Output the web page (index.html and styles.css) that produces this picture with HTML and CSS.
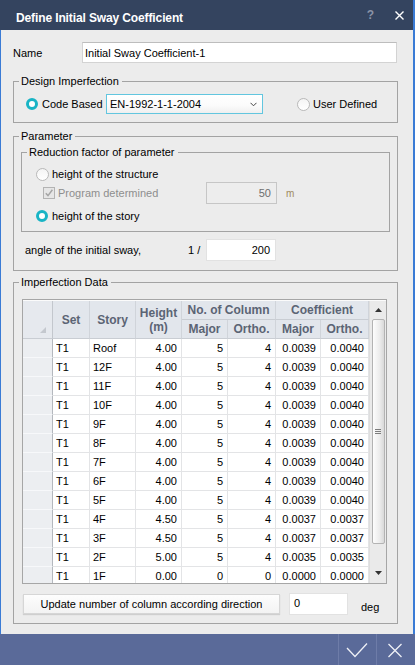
FILE: index.html
```html
<!DOCTYPE html>
<html>
<head>
<meta charset="utf-8">
<link rel="stylesheet" href="styles.css">
</head>
<body>
<div class="window">
  <div class="titlebar">
    <span class="title">Define Initial Sway Coefficient</span>
    <span class="help">?</span>
    <svg class="close" width="9" height="9" viewBox="0 0 9 9"><path d="M0.5 0.5 L8.5 8.5 M8.5 0.5 L0.5 8.5" stroke="#ffffff" stroke-width="1.4" fill="none"/></svg>
  </div>
  <div class="content">
    <div class="name-row">
      <span class="name-label">Name</span>
      <div class="field name-field">Initial Sway Coefficient-1</div>
    </div>

    <fieldset class="group g-design">
      <legend class="lg-design">Design Imperfection</legend>
      <div class="design-row">
        <span class="radio on"></span>
        <span class="rlabel code-label">Code Based</span>
        <div class="select">
          <span>EN-1992-1-1-2004</span>
          <svg width="7" height="5" viewBox="0 0 7 5"><path d="M0.5 0.8 L3.5 3.8 L6.5 0.8" stroke="#444" stroke-width="1" fill="none"/></svg>
        </div>
        <span class="radio off user-radio"></span>
        <span class="rlabel">User Defined</span>
      </div>
    </fieldset>

    <fieldset class="group g-param">
      <legend class="lg-param">Parameter</legend>
      <fieldset class="group g-reduce">
        <legend class="lg-reduce">Reduction factor of parameter</legend>
        <div class="opt-row">
          <span class="radio off"></span>
          <span class="rlabel">height of the structure</span>
        </div>
        <div class="check-row">
          <span class="checkbox">
            <svg width="10" height="10" viewBox="0 0 10 10"><path d="M1.8 5.2 L4 7.6 L8.4 1.8" stroke="#a5a5a5" stroke-width="1.5" fill="none"/></svg>
          </span>
          <span class="dis-label">Program determined</span>
          <div class="field dis-field">50</div>
          <span class="unit">m</span>
        </div>
        <div class="opt-row story-row">
          <span class="radio on"></span>
          <span class="rlabel">height of the story</span>
        </div>
      </fieldset>
      <div class="angle-row">
        <span class="angle-label">angle of the initial sway,</span>
        <span class="ratio">1 /</span>
        <div class="field num-field">200</div>
      </div>
    </fieldset>

    <fieldset class="group g-data">
      <legend class="lg-data">Imperfection Data</legend>
      <div class="grid-wrap">
        <div class="grid">
          <div class="hc corner"><span class="tri"></span></div>
          <div class="hc span2">Set</div>
          <div class="hc span2">Story</div>
          <div class="hc span2 two">Height<br>(m)</div>
          <div class="hc cspan2">No. of Column</div>
          <div class="hc cspan2">Coefficient</div>
          <div class="hc">Major</div>
          <div class="hc">Ortho.</div>
          <div class="hc">Major</div>
          <div class="hc">Ortho.</div>

          <div class="rh"></div><div class="c">T1</div><div class="c">Roof</div><div class="c r">4.00</div><div class="c r">5</div><div class="c r">4</div><div class="c r">0.0039</div><div class="c r">0.0040</div>
          <div class="rh"></div><div class="c">T1</div><div class="c">12F</div><div class="c r">4.00</div><div class="c r">5</div><div class="c r">4</div><div class="c r">0.0039</div><div class="c r">0.0040</div>
          <div class="rh"></div><div class="c">T1</div><div class="c">11F</div><div class="c r">4.00</div><div class="c r">5</div><div class="c r">4</div><div class="c r">0.0039</div><div class="c r">0.0040</div>
          <div class="rh"></div><div class="c">T1</div><div class="c">10F</div><div class="c r">4.00</div><div class="c r">5</div><div class="c r">4</div><div class="c r">0.0039</div><div class="c r">0.0040</div>
          <div class="rh"></div><div class="c">T1</div><div class="c">9F</div><div class="c r">4.00</div><div class="c r">5</div><div class="c r">4</div><div class="c r">0.0039</div><div class="c r">0.0040</div>
          <div class="rh"></div><div class="c">T1</div><div class="c">8F</div><div class="c r">4.00</div><div class="c r">5</div><div class="c r">4</div><div class="c r">0.0039</div><div class="c r">0.0040</div>
          <div class="rh"></div><div class="c">T1</div><div class="c">7F</div><div class="c r">4.00</div><div class="c r">5</div><div class="c r">4</div><div class="c r">0.0039</div><div class="c r">0.0040</div>
          <div class="rh"></div><div class="c">T1</div><div class="c">6F</div><div class="c r">4.00</div><div class="c r">5</div><div class="c r">4</div><div class="c r">0.0039</div><div class="c r">0.0040</div>
          <div class="rh"></div><div class="c">T1</div><div class="c">5F</div><div class="c r">4.00</div><div class="c r">5</div><div class="c r">4</div><div class="c r">0.0039</div><div class="c r">0.0040</div>
          <div class="rh"></div><div class="c">T1</div><div class="c">4F</div><div class="c r">4.50</div><div class="c r">5</div><div class="c r">4</div><div class="c r">0.0037</div><div class="c r">0.0037</div>
          <div class="rh"></div><div class="c">T1</div><div class="c">3F</div><div class="c r">4.50</div><div class="c r">5</div><div class="c r">4</div><div class="c r">0.0037</div><div class="c r">0.0037</div>
          <div class="rh"></div><div class="c">T1</div><div class="c">2F</div><div class="c r">5.00</div><div class="c r">5</div><div class="c r">4</div><div class="c r">0.0035</div><div class="c r">0.0035</div>
          <div class="rh"></div><div class="c">T1</div><div class="c">1F</div><div class="c r">0.00</div><div class="c r">0</div><div class="c r">0</div><div class="c r">0.0000</div><div class="c r">0.0000</div>
        </div>
        <div class="scrollbar">
          <div class="sb-btn">
            <svg width="7" height="4" viewBox="0 0 7 4"><path d="M0 4 L3.5 0 L7 4 Z" fill="#333"/></svg>
          </div>
          <div class="thumb">
            <span class="grip"></span><span class="grip"></span><span class="grip"></span>
          </div>
          <div class="sb-btn sb-down">
            <svg width="7" height="4" viewBox="0 0 7 4"><path d="M0 0 L3.5 4 L7 0 Z" fill="#333"/></svg>
          </div>
        </div>
      </div>
      <div class="update-row">
        <div class="btn">Update number of column according direction</div>
        <div class="field deg-field">0</div>
        <span class="deg">deg</span>
      </div>
    </fieldset>
  </div>
  <div class="footer">
    <div class="fbtn">
      <svg width="38" height="31" viewBox="0 0 38 31"><path d="M9 14 L17 22.5 L29 9.5" stroke="#eef0f6" stroke-width="1.3" fill="none"/></svg>
    </div>
    <div class="fbtn fbtn2">
      <svg width="39" height="31" viewBox="0 0 39 31"><path d="M12.5 10 L25.5 23 M25.5 10 L12.5 23" stroke="#eef0f6" stroke-width="1.3" fill="none"/></svg>
    </div>
  </div>
</div>
</body>
</html>
```
FILE: styles.css
```css
* { box-sizing: border-box; }
html, body { margin: 0; padding: 0; }
body {
  width: 415px;
  height: 665px;
  font-family: "Liberation Sans", Arial, sans-serif;
  font-size: 11px;
  color: #000;
  background: #ececec;
  overflow: hidden;
}
.window {
  width: 415px;
  height: 665px;
  display: flex;
  flex-direction: column;
}
.titlebar {
  height: 30px;
  flex: none;
  background: #34445f;
  border-right: 2px solid #3a7bd5;
  display: flex;
  align-items: flex-start;
}
.title {
  flex: 1;
  margin-top: 11px;
  padding-left: 16px;
  line-height: 14px;
  font-size: 12px;
  font-weight: bold;
  color: #ffffff;
  letter-spacing: -0.12px;
}
.help {
  margin-top: 8px;
  line-height: 14px;
  font-size: 12px;
  font-weight: bold;
  color: #8a93a6;
}
.close {
  margin: 11px 9px 0 21px;
}
.content {
  flex: 1;
  background: #ececec;
  border-left: 1px solid #3a7bd5;
  border-right: 2px solid #3a7bd5;
  padding: 12px 15px 0 12px;
}
.name-row {
  display: flex;
  align-items: center;
  height: 21px;
}
.name-label { width: 69px; }
.field {
  background: #ffffff;
  border: 1px solid #d3d3d3;
  border-top-color: #bdbdbd;
  display: flex;
  align-items: center;
  padding: 0 3px 0 2px;
}
.name-field {
  width: 315px;
  height: 21px;
}

/* groups */
.group {
  margin: 0;
  min-width: 0;
  border: 1px solid #a3a3a3;
}
.group legend {
  line-height: 15px;
  padding: 0 3px 0 2px;
  font-size: 11px;
}
.g-design {
  margin-top: 11px;
  padding: 5px 0 8px 12px;
}
.lg-design { margin-left: -7px; }
.design-row {
  display: flex;
  align-items: center;
  height: 20px;
}
.radio {
  flex: none;
  border-radius: 50%;
  background: #fff;
}
.radio.on {
  width: 12px;
  height: 12px;
  border: 3px solid #19b4c5;
}
.radio.off {
  width: 13px;
  height: 13px;
  border: 1px solid #b9b9b9;
  background: linear-gradient(#f4f4f4, #ffffff);
}
.rlabel { margin-left: 4px; }
.radio.off + .rlabel { margin-left: 3px; }
.code-label {
  width: 64px;
  flex: none;
  white-space: nowrap;
}
.select {
  flex: none;
  width: 157px;
  height: 20px;
  border: 1px solid #62c6df;
  background: linear-gradient(#ffffff 0%, #fbfbfb 60%, #efefef 100%);
  display: flex;
  align-items: center;
  justify-content: space-between;
  padding: 0 5px 0 3px;
}
.user-radio { margin-left: 34px; }

.g-param {
  margin-top: 6px;
  padding: 1px 7px 9px 7px;
}
.lg-param { margin-left: -2px; }
.g-reduce {
  padding: 6px 0 7px 14px;
}
.lg-reduce { margin-left: -9px; }
.opt-row {
  display: flex;
  align-items: center;
  height: 16px;
}
.story-row { margin-top: 4px; }
.check-row {
  display: flex;
  align-items: center;
  height: 22px;
}
.checkbox {
  margin-left: 7px;
  width: 12px;
  height: 12px;
  border: 1px solid #b3b3b3;
  background: #e6e6e6;
  display: flex;
  align-items: center;
  justify-content: center;
  margin-top: -1px;
}
.dis-label {
  width: 151px;
  padding-left: 3px;
  color: #8e8e8e;
}
.dis-field {
  width: 71px;
  height: 22px;
  background: #ededed;
  border-color: #c6c6c6;
  color: #6d6d6d;
  justify-content: flex-end;
  padding-right: 5px;
}
.unit {
  margin-left: 9px;
  font-size: 10px;
  color: #a08a62;
}
.angle-row {
  margin-top: 7px;
  display: flex;
  align-items: center;
  height: 22px;
  padding-left: 4px;
}
.angle-label { width: 163px; flex: none; white-space: nowrap; }
.ratio { width: 18px; flex: none; }
.num-field {
  width: 70px;
  height: 22px;
  justify-content: flex-end;
  padding-right: 5px;
  border-color: #e2e2e2;
}

.g-data {
  margin-top: 4px;
  padding: 9px 0 8px 8px;
}
.lg-data { margin-left: -3px; }
.grid-wrap {
  width: 365px;
  height: 285px;
  border: 1px solid #a6a6a6;
  background: #fbfbfb;
  display: flex;
  padding-top: 1px;
  overflow: hidden;
}
.grid {
  width: 346px;
  flex: none;
  display: grid;
  grid-template-columns: 30px 37px 46px 46px 46px 48px 45px 48px;
  grid-auto-rows: 19px;
  align-content: start;
}
.hc {
  background: #e2e6ec;
  border-right: 1px solid #d0d4da;
  border-bottom: 1px solid #c9cdd3;
  color: #5b6474;
  font-weight: bold;
  font-size: 12px;
  display: flex;
  align-items: center;
  justify-content: center;
  text-align: center;
  line-height: 14px;
}
.span2 { grid-row: span 2; }
.cspan2 { grid-column: span 2; }
.corner {
  grid-row: span 2;
  position: relative;
  background: #e6e9ee;
  border-right-color: #c3c7cd;
}
.tri {
  position: absolute;
  right: 6px;
  bottom: 5px;
  width: 0;
  height: 0;
  border-left: 6px solid transparent;
  border-bottom: 6px solid #c4c8ce;
}
.rh {
  background: #eceef1;
  border-right: 1px solid #b4b8be;
  border-bottom: 1px solid #f7f8fa;
}
.c {
  background: #ffffff;
  border-right: 1px solid #e3e4e6;
  border-bottom: 1px solid #e3e4e6;
  padding: 0 4px 0 3px;
  display: flex;
  align-items: center;
  white-space: nowrap;
}
.c.r { justify-content: flex-end; }

.scrollbar {
  flex: 1;
  background: #eaeaea;
  border-left: 1px solid #dedede;
  display: flex;
  flex-direction: column;
  align-items: center;
}
.sb-btn {
  height: 18px;
  width: 100%;
  display: flex;
  align-items: center;
  justify-content: center;
  flex: none;
}
.thumb {
  width: 13px;
  height: 225px;
  flex: none;
  border: 1px solid #b3b3b3;
  border-radius: 2px;
  background: linear-gradient(to right, #fdfdfd, #ececec 60%, #d9d9d9);
  display: flex;
  flex-direction: column;
  align-items: center;
  justify-content: center;
  gap: 1px;
}
.grip {
  width: 6px;
  height: 1px;
  background: #7d7d7d;
}
.sb-down {
  margin-top: auto;
  height: 20px;
}

.update-row {
  margin-top: 9px;
  display: flex;
  align-items: center;
  height: 22px;
}
.btn {
  margin-left: 1px;
  width: 257px;
  height: 20px;
  border: 1px solid #d6d6d6;
  background: linear-gradient(#fdfdfd, #f3f3f3);
  box-shadow: 0 1px 1px rgba(0, 0, 0, 0.12);
  display: flex;
  align-items: center;
  justify-content: center;
}
.deg-field {
  margin-left: 9px;
  width: 59px;
  height: 22px;
  align-items: flex-start;
  padding: 3px 4px 0 4px;
  border-color: #e2e2e2;
}
.deg {
  margin-left: 13px;
  margin-top: 6px;
}

.footer {
  height: 31px;
  flex: none;
  background: #5a6a99;
  display: flex;
  justify-content: flex-end;
}
.fbtn {
  width: 38px;
  height: 31px;
  border-left: 1px solid #6e7ca8;
}
.fbtn svg { display: block; margin-left: -1px; }
.fbtn2 { width: 39px; }
```
